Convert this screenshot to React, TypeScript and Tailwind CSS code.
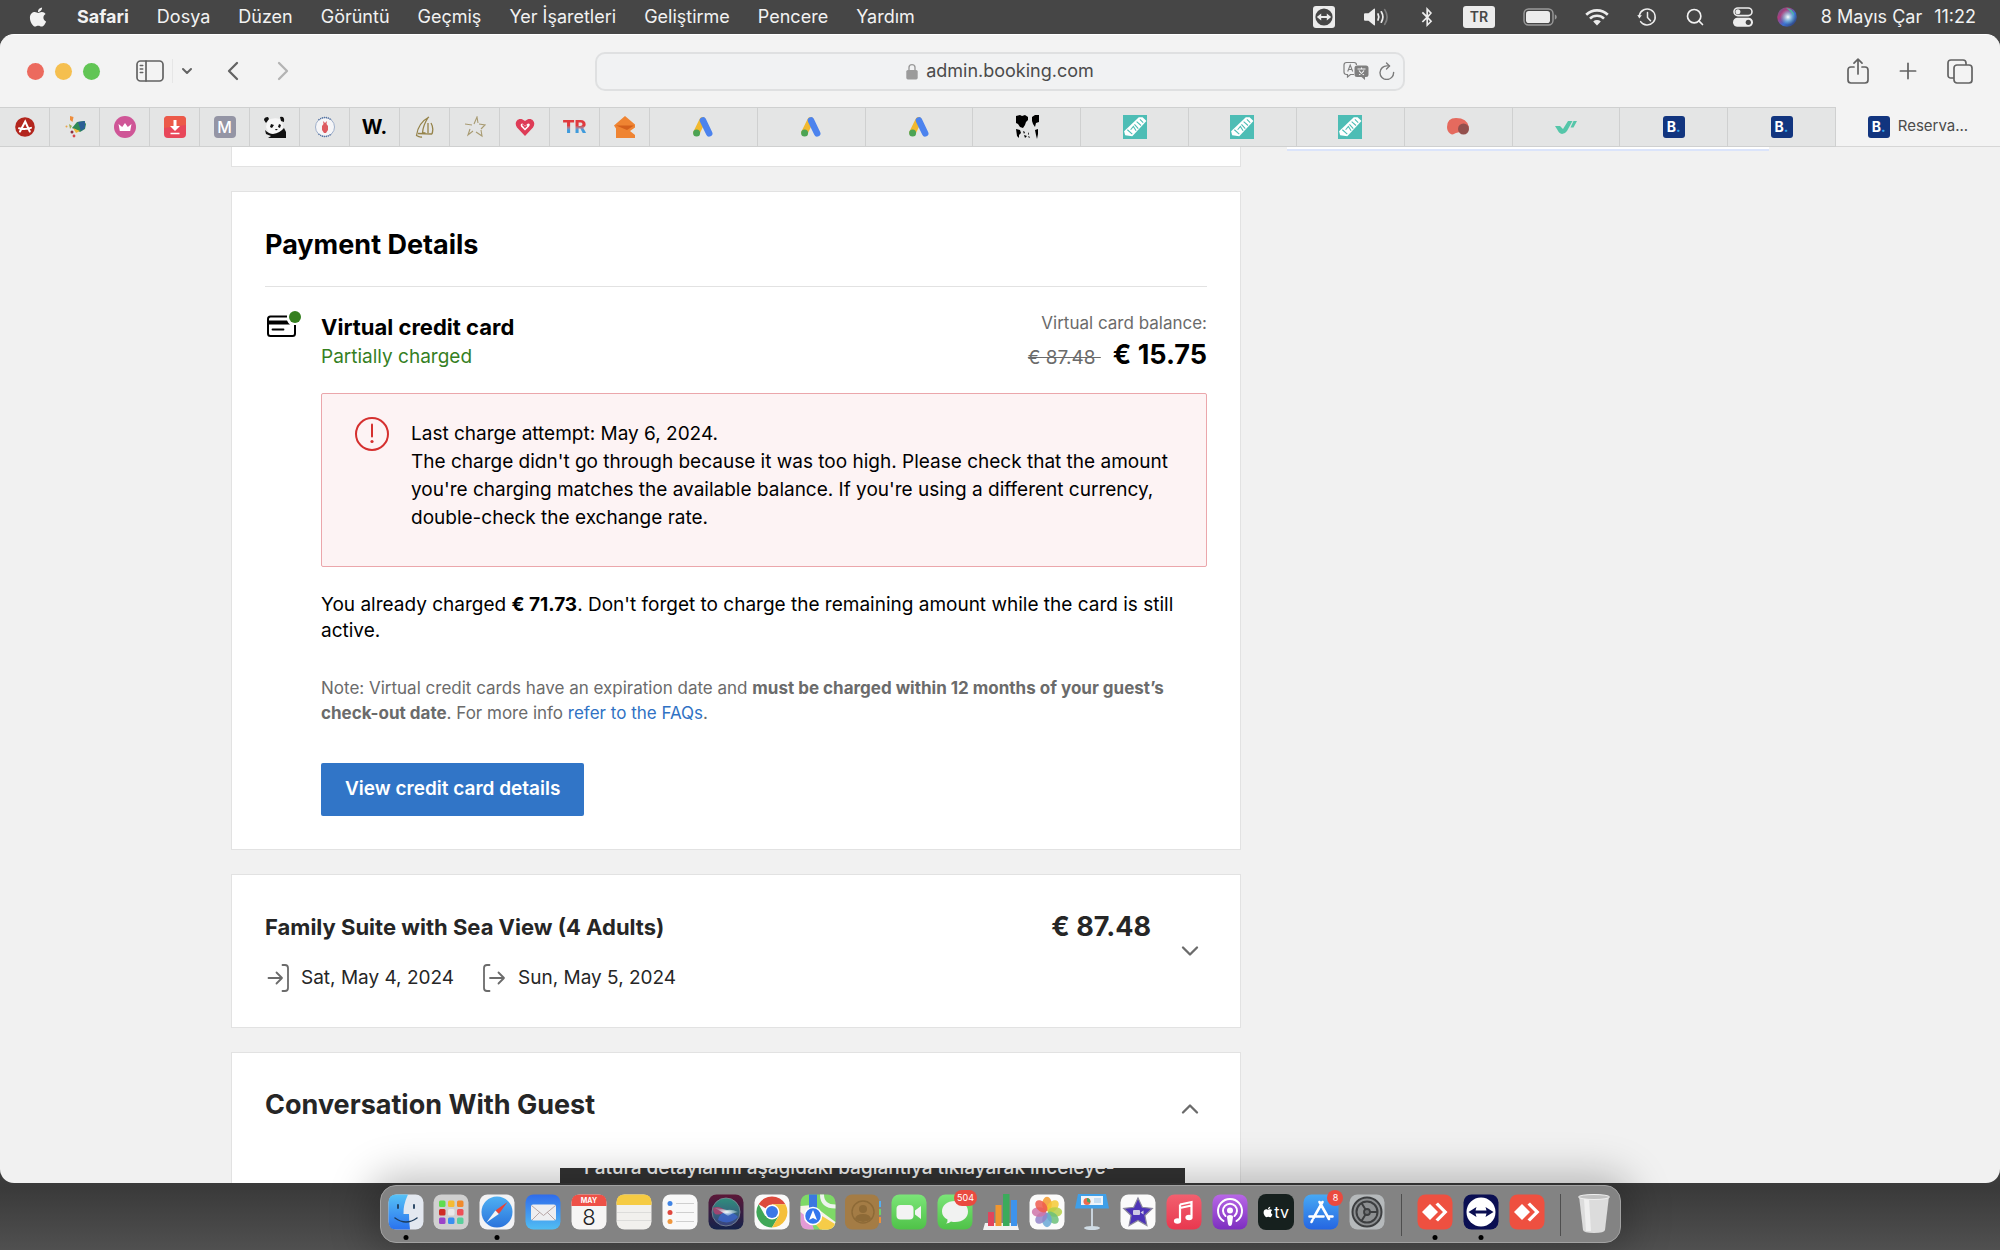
import React, { useState } from 'react';
import { FaApple, FaBluetoothB } from 'react-icons/fa';
import { ChevronDown, ChevronLeft, ChevronRight, ChevronUp, Plus, Search } from 'lucide-react';

const MENUS = ['Dosya', 'Düzen', 'Görüntü', 'Geçmiş', 'Yer İşaretleri', 'Geliştirme', 'Pencere', 'Yardım'];

interface IconProps {
  className?: string;
}

/* ---------- menu bar icons ---------- */

const TeamViewerGlyph: React.FC<IconProps> = ({ className }) => (
  <svg className={className} viewBox="0 0 22 22">
    <rect width="22" height="22" rx="3" fill="#ececec" />
    <circle cx="11" cy="11" r="8.6" fill="#464646" />
    <path d="M3.8 11l4.4-3.4v2.3h5.6V7.6l4.4 3.4-4.4 3.4v-2.3H8.2v2.3z" fill="#ececec" />
  </svg>
);

const VolumeIcon: React.FC<IconProps> = ({ className }) => (
  <svg className={className} viewBox="0 0 28 20" fill="none" strokeWidth="1.7" strokeLinecap="round">
    <path d="M1 7.2q0-1 1-1h3.500L11 1.800q1-.7 1 .5v15.400q0 1.200-1 .5l-5.500-4.400H2q-1 0-1-1z" fill="#ececec" />
    <path d="M15 7q1.600 3 0 6" stroke="#ececec" />
    <path d="M18.300 4.800q3.200 5.200 0 10.400" stroke="#ececec" />
    <path d="M21.700 2.600q4.800 7.400 0 14.800" stroke="#7d7d7d" />
  </svg>
);

const BatteryIcon: React.FC<IconProps> = ({ className }) => (
  <svg className={className} viewBox="0 0 34 18">
    <rect x="1" y="1" width="29" height="16" rx="4.5" fill="none" stroke="#9a9a9a" strokeWidth="1.4" />
    <rect x="3" y="3" width="24" height="12" rx="2.8" fill="#ececec" />
    <path d="M31.800 6.200q2 1 2 2.800t-2 2.800z" fill="#9a9a9a" />
  </svg>
);

const WifiIcon: React.FC<IconProps> = ({ className }) => (
  <svg className={className} viewBox="0 0 24 18" fill="none" stroke="#ececec" strokeWidth="2.6">
    <path d="M1.200 6.800a15.400 15.400 0 0 1 21.600 0" />
    <path d="M5 10.600a10 10 0 0 1 14 0" />
    <path d="M12 17.600l-3.800-4a5.600 5.600 0 0 1 7.600 0z" fill="#ececec" stroke="none" />
  </svg>
);

const TimeMachineIcon: React.FC<IconProps> = ({ className }) => (
  <svg className={className} viewBox="0 0 20 20" fill="none" stroke="#ececec" strokeWidth="1.5" strokeLinecap="round">
    <path d="M2.400 8.200a8 8 0 1 1 1.200 6.400" />
    <path d="M10.500 5.500v5l3 3.300" />
    <path d="M.3 8l4.600.2-2.600 3.300z" fill="#ececec" stroke="none" />
  </svg>
);

const ControlCenterIcon: React.FC<IconProps> = ({ className }) => (
  <svg className={className} viewBox="0 0 20 20">
    <rect x="1" y="1" width="18" height="7.6" rx="3.8" fill="none" stroke="#ececec" strokeWidth="1.6" />
    <circle cx="4.9" cy="4.8" r="2.5" fill="#ececec" />
    <rect y="10.8" width="20" height="9" rx="4.5" fill="#ececec" />
    <circle cx="15.3" cy="15.3" r="2.6" fill="#464646" />
  </svg>
);

const SiriOrb: React.FC<IconProps> = ({ className }) => (
  <svg className={className} viewBox="0 0 20 20">
    <defs>
      <linearGradient id="orb" x1="0" y1="0" x2="1" y2="1">
        <stop offset="0" stopColor="#3b6f8f" />
        <stop offset=".3" stopColor="#b23a7c" />
        <stop offset=".6" stopColor="#3d6fd0" />
        <stop offset="1" stopColor="#2b355f" />
      </linearGradient>
      <radialGradient id="orbGlow" cx=".55" cy=".5" r=".4">
        <stop offset="0" stopColor="#fff" />
        <stop offset="1" stopColor="#6fe0d8" stopOpacity="0" />
      </radialGradient>
    </defs>
    <circle cx="10" cy="10" r="9.8" fill="url(#orb)" />
    <circle cx="10" cy="10" r="9.8" fill="url(#orbGlow)" />
    <path d="M9 1q7 0 8 8-3-5-8-8z" fill="#3fcf9c" opacity=".8" />
  </svg>
);

/* ---------- toolbar icons ---------- */

const SidebarIcon: React.FC<IconProps> = ({ className }) => (
  <svg className={className} viewBox="0 0 28 22" fill="none" stroke="#636363" strokeWidth="1.7" strokeLinecap="round">
    <rect x="1" y="1" width="26" height="20" rx="3.5" />
    <path d="M10 1v20" />
    <path d="M4.200 5.500h2.600M4.200 9h2.600M4.200 12.500h2.600" strokeWidth="1.4" />
  </svg>
);

const LockIcon: React.FC<IconProps> = ({ className }) => (
  <svg className={className} viewBox="0 0 12 17">
    <path d="M3 8V4.600a3 3 0 0 1 6 0V8" fill="none" stroke="#9b9b9b" strokeWidth="1.4" />
    <rect x=".3" y="7" width="11.4" height="9.4" rx="1.6" fill="#9b9b9b" />
  </svg>
);

const TranslateIcon: React.FC<IconProps> = ({ className }) => (
  <svg className={className} viewBox="0 0 26 20" fill="none">
    <path d="M11 13.500H7.500L4.500 16v-2.500H3.500Q1 13.500 1 11V4Q1 1.500 3.500 1.500h7.500q2.500 0 2.500 2.500" stroke="#7f7f7f" strokeWidth="1.2" />
    <path d="M4.700 10.500L7.200 4l2.500 6.500M5.500 8.500h3.400" stroke="#7f7f7f" strokeWidth="1.1" />
    <path d="M14 4.500h9q2.500 0 2.500 2.500v6.500q0 2.500-2.500 2.500h-1v3l-3.500-3H14q-2.500 0-2.500-2.500V7q0-2.500 2.500-2.500z" fill="#7f7f7f" />
    <path d="M14.500 8h8M18.500 6.500V8M16 9.500q1.500 3 5 4.300M21 9.500q-1.500 3-5 4.300" stroke="#f1f2f3" strokeWidth="1.1" />
  </svg>
);

const ReloadIcon: React.FC<IconProps> = ({ className }) => (
  <svg className={className} viewBox="0 0 16 18" fill="none" stroke="#7a7a7a" strokeWidth="1.4" strokeLinecap="round">
    <path d="M14.600 10.400A6.800 6.800 0 1 1 8.300 3.900h2" />
    <path d="M7.500 1l3 3-3 3" />
  </svg>
);

const ShareIcon: React.FC<IconProps> = ({ className }) => (
  <svg className={className} viewBox="0 0 22 26" fill="none" stroke="#636363" strokeWidth="1.7" strokeLinecap="round" strokeLinejoin="round">
    <path d="M7 9H4Q1 9 1 12v10q0 3 3 3h14q3 0 3-3V12q0-3-3-3h-3" />
    <path d="M11 16V1.500M7 5.200l4-4 4 4" />
  </svg>
);

const TabsIcon: React.FC<IconProps> = ({ className }) => (
  <svg className={className} viewBox="0 0 26 25" fill="none" stroke="#636363" strokeWidth="1.7">
    <path d="M7 19H4q-3 0-3-3V4q0-3 3-3h12q3 0 3 3v2" />
    <rect x="7" y="6" width="18" height="18" rx="3" />
  </svg>
);

/* ---------- favicons ---------- */

const AdsIcon = () => (
  <svg className="size-[22px]" viewBox="0 0 22 22">
    <path d="M10.500 4.500L4.600 16.500" stroke="#f2b92f" strokeWidth="6.5" strokeLinecap="round" />
    <path d="M11 4.500l6.200 12.800" stroke="#4c83ee" strokeWidth="6.5" strokeLinecap="round" />
    <circle cx="4.6" cy="17" r="3.5" fill="#4ca354" />
  </svg>
);

const NutsIcon = () => (
  <svg className="size-6" viewBox="0 0 22 22">
    <rect width="22" height="22" fill="#4dbdb5" />
    <path d="M1 15L14.500 2H18l3.500 3.500L8.500 19.500 2 18.500z" fill="#fff" />
    <path d="M4 13.500l4.500 4M7 13.500l2.500-3 2.500 4M10.500 8.500l3.500 4M12.500 6l4 3.600M15.500 4l3 3" fill="none" stroke="#4dbdb5" strokeWidth="1" />
  </svg>
);

const WorldIcon = () => (
  <svg className="size-6" viewBox="0 0 24 24" fill="#000">
    <path d="M1 1l4-1 2 1 3-1 3 2v3l-2 2-1 3-2 3-3-1-2-3-2-1zM17 2l3-2h4v7l-3 1-1 4-2-3-1-3zM1 14l4 1 1 3-2 2v3l-2-2zM8 16l2 1-1 2zM9 20l3 1-2 2zM20 15l3-1v5l-1 5-1-4zM13 17l1 2-1 1zM13 21l2 1-1 1z" />
  </svg>
);

const BookingIcon = () => (
  <span className="flex size-[22px] items-center justify-center rounded-[3px] bg-[#12357f] text-sm font-bold text-white">
    B<span className="text-[#35a8ef]">.</span>
  </span>
);

const SMALL_TABS: { name: string; icon: React.ReactNode }[] = [
  {
    name: 'Agency',
    icon: (
      <svg className="size-5" viewBox="0 0 20 20">
        <circle cx="10" cy="10" r="9.8" fill="#b3261e" />
        <path d="M5 14.500L10.200 4.500l4.600 10M4 11.300q6 1.600 12-.4" fill="none" stroke="#fff" strokeWidth="2" strokeLinecap="round" />
      </svg>
    ),
  },
  {
    name: 'Peacock',
    icon: (
      <svg className="size-[22px]" viewBox="0 0 22 22">
        <path d="M6 0l3.500 1-1 5L6 4z" fill="#ee8d3c" />
        <circle cx="2.500" cy="10.500" r="1" fill="#e9a348" />
        <path d="M5 8l3 2-2 3z" fill="#9bb04e" />
        <path d="M8 12l5-6 7-1 2 3-1 5-5 3z" fill="#2e8a57" />
        <path d="M14 6l7-1v7l-4 3z" fill="#2c5f95" />
        <path d="M9 12l7 3-4 2z" fill="#efb93c" />
        <circle cx="8" cy="16" r="1.500" fill="#8e2f3e" />
        <circle cx="10" cy="20" r="1.400" fill="#d8454a" />
      </svg>
    ),
  },
  {
    name: 'Crown',
    icon: (
      <svg className="size-[22px]" viewBox="0 0 22 22">
        <circle cx="11" cy="11" r="11" fill="#cf5697" />
        <path d="M4.500 8l3.700 3L11 7l2.800 4 3.700-3-1.300 7H5.800z" fill="#fff" />
      </svg>
    ),
  },
  {
    name: 'Download',
    icon: (
      <svg className="size-[22px]" viewBox="0 0 22 22">
        <rect width="22" height="22" rx="4" fill="#e8475a" />
        <path d="M4 0h14q4 0 4 4v5L0 12V4q0-4 4-4z" fill="#ec5f45" opacity=".8" />
        <path d="M9.500 4h3v6H16l-5 5-5-5h3.500z" fill="#fff" />
        <path d="M6.500 17.500h9" stroke="#fff" strokeWidth="1.5" />
      </svg>
    ),
  },
  {
    name: 'M',
    icon: <span className="flex size-[22px] items-center justify-center rounded bg-[#9495a5] text-base font-medium text-white">M</span>,
  },
  {
    name: 'Panda',
    icon: (
      <svg className="size-6" viewBox="0 0 24 24">
        <path d="M5 5q6-3 12-1l3 6-1 6-6 4-7-2-3-6z" fill="#f7f7f7" />
        <path d="M1 5q0-3 4-3l1 2-3 4zM17 2q5-1 4 5l-3-1zM8 9l3 1-2 3-2-1zM16 9l2 1-1 3-2-1zM12 14h3l-2 1.500z" fill="#111" />
        <path d="M2 15q4 4 8 4 7-1 11-6l2 4v6H5l3-2-5-2z" fill="#111" />
      </svg>
    ),
  },
  {
    name: 'Ministry',
    icon: (
      <svg className="size-[22px]" viewBox="0 0 22 22">
        <circle cx="11" cy="11" r="9.5" fill="#f5f5f7" stroke="#9fb0cb" strokeWidth="1" />
        <path d="M4.500 4q6.500-5 13 0M4.500 18q6.500 5 13 0" fill="none" stroke="#4f6f9f" strokeWidth="1.5" strokeDasharray="1 1" />
        <path d="M9 5l2 2 2-2-.5 3 1.500 2v4l-2 3h-2l-2-3v-4l1.500-2z" fill="#dd5a5f" />
      </svg>
    ),
  },
  { name: 'W', icon: <span className="text-xl font-bold text-black">W.</span> },
  {
    name: 'Sail',
    icon: (
      <svg className="size-[22px]" viewBox="0 0 22 22" fill="none" stroke="#95834a" strokeWidth="1.3">
        <path d="M15 1Q4 7 2.500 19.500q3 2 5.500 1.500M14.500 1Q9 9 8.500 17h3M14 7v10M17 7q3 5 1 11M4 17.500l14 .5" />
      </svg>
    ),
  },
  {
    name: 'Star',
    icon: (
      <svg className="size-[22px]" viewBox="0 0 22 22" fill="none" stroke="#a89b72" strokeWidth="1.1">
        <path d="M10 8l3-7 1 6M15 8l6 1-4 4M17 14l1 6-6-4M9 15l-5 4 2-6M1 8l7 1" />
      </svg>
    ),
  },
  {
    name: 'Heart',
    icon: (
      <svg className="size-5" viewBox="0 0 20 20">
        <path d="M10 19L2 10.500C-2 5 4-1.500 10 4c6-5.500 12 1 8 6.500z" fill="#de3c57" />
        <path d="M10 13.500L6 9.500q-1-3 1.500-3L10 9l3-2.500q3 0 1 3z" fill="#fff" />
        <path d="M7.500 7.500l2.500 3 2-2" fill="none" stroke="#de3c57" strokeWidth="1.2" />
      </svg>
    ),
  },
  { name: 'TR', icon: <span className="bg-gradient-to-b from-[#e03a3e] from-45% to-[#3f9bdc] to-60% bg-clip-text text-lg font-extrabold text-transparent">TR</span> },
  {
    name: 'Home',
    icon: (
      <svg className="size-[22px]" viewBox="0 0 22 22">
        <path d="M11 0l10 8.500v3L16 15l5 4v3H2V12.500L0 9.500z" fill="#ef8432" />
        <path d="M2 9.500h18L13 14z" fill="#d4601c" />
      </svg>
    ),
  },
];

const WIDE_TABS: { name: string; icon: React.ReactNode }[] = [
  { name: 'Google Ads 1', icon: <AdsIcon /> },
  { name: 'Google Ads 2', icon: <AdsIcon /> },
  { name: 'Google Ads 3', icon: <AdsIcon /> },
  { name: 'World', icon: <WorldIcon /> },
  { name: 'Nuts 1', icon: <NutsIcon /> },
  { name: 'Nuts 2', icon: <NutsIcon /> },
  { name: 'Nuts 3', icon: <NutsIcon /> },
  {
    name: 'Petal',
    icon: (
      <svg className="size-[22px]" viewBox="0 0 22 22">
        <path d="M3 17.500Q0 15 0 11 0 2 9 2q11 0 13 9-2 5-9 5-5 1-6 2-2 1-4-.5z" fill="#e56a5e" />
        <circle cx="16.500" cy="13" r="5.500" fill="#93504d" />
      </svg>
    ),
  },
  {
    name: 'Check',
    icon: (
      <svg className="size-[22px]" viewBox="0 0 22 22" fill="#55c6a9">
        <path d="M0 10h5l3 3 5-8h4.500L12 15q-2 3-5 3-3-.5-4.500-4z" />
        <path d="M18.500 5H22l-3.500 6.500h-3z" />
      </svg>
    ),
  },
  { name: 'Booking 1', icon: <BookingIcon /> },
  { name: 'Booking 2', icon: <BookingIcon /> },
];

/* ---------- dock ---------- */

interface TileProps {
  fill: string;
  children?: React.ReactNode;
}

const Tile: React.FC<TileProps> = ({ fill, children }) => (
  <svg className="size-9" viewBox="0 0 36 36">
    <rect x=".5" y=".5" width="35" height="35" rx="8" fill={fill} />
    {children}
  </svg>
);

const APP_GRID = ['#5fdc4f', '#f5bb33', '#f08a2c', '#cf2b25', '#e8e8e8', '#ee4f57', '#9b44c9', '#3a8ff0', '#59cf9b'];
const PETALS = ['#f39a2b', '#f5c935', '#b4cf48', '#6bbf79', '#6aa8d6', '#9384c8', '#cf74a8', '#ee5a4c'];

const AnyDeskTile = () => (
  <Tile fill="#ee5040">
    <path d="M5 18l8-8 8 8-8 8z" fill="#fff" />
    <path d="M18.500 10.500l2.500-2 9.500 9.500-9.500 9.500-2.500-2L26 18z" fill="#fff" />
  </Tile>
);

const DOCK_APPS: { name: string; running?: boolean; badge?: string; icon: React.ReactNode }[] = [
  {
    name: 'Finder',
    running: true,
    icon: (
      <Tile fill="#e3e8f0">
        <path d="M8.500.5H20Q15 11 15.500 20H21q0 8 1 15.500H8.500q-8 0-8-8v-19q0-8 8-8z" fill="url(#finderBlue)" />
        <path d="M10 11v3M26 11v3" stroke="#1d3c5c" strokeWidth="1.8" strokeLinecap="round" />
        <path d="M7 24q11 8 22 0" fill="none" stroke="#1d3c5c" strokeWidth="1.5" strokeLinecap="round" />
      </Tile>
    ),
  },
  {
    name: 'Launchpad',
    icon: (
      <Tile fill="#d0d0d0">
        {APP_GRID.map((color, i) => (
          <rect key={color} x={6 + (i % 3) * 9} y={6.5 + Math.floor(i / 3) * 8.5} width="6.5" height="6.5" rx="1.5" fill={color} />
        ))}
      </Tile>
    ),
  },
  {
    name: 'Safari',
    running: true,
    icon: (
      <Tile fill="#f3f3f5">
        <circle cx="18" cy="18" r="15.5" fill="url(#safariBlue)" />
        <path d="M28.500 8L19.800 20l-3.400-3.600z" fill="#ea4335" />
        <path d="M7.500 28.500l8.900-12.100 3.400 3.600z" fill="#f4f4f4" />
      </Tile>
    ),
  },
  {
    name: 'Mail',
    icon: (
      <Tile fill="url(#mailBlue)">
        <rect x="6" y="10.500" width="25" height="16" rx="2" fill="#eeeef0" />
        <path d="M6.500 11.500l12 10 12-10M7 26l8-8M30 26l-8-8" fill="none" stroke="#b7a6a6" strokeWidth="1" />
      </Tile>
    ),
  },
  {
    name: 'Calendar',
    icon: (
      <Tile fill="#f6f5f4">
        <path d="M8.500.5h19q8 0 8 8V12H.5V8.500q0-8 8-8z" fill="#ee5147" />
        <text x="18" y="9" textAnchor="middle" fontSize="7" fontWeight="700" fill="#fff">MAY</text>
        <text x="18" y="31" textAnchor="middle" fontSize="22" fontWeight="300" fill="#222">8</text>
      </Tile>
    ),
  },
  {
    name: 'Notes',
    icon: (
      <Tile fill="#f1f0ed">
        <path d="M8.500.5h19q8 0 8 8V11H.5V8.500q0-8 8-8z" fill="#f5cb43" />
        <path d="M1 18.500h34M1 26.500h34" stroke="#dcdcda" strokeWidth="1" />
      </Tile>
    ),
  },
  {
    name: 'Reminders',
    icon: (
      <Tile fill="#f8f8f8">
        <circle cx="8" cy="9.500" r="2.500" fill="#3f84e5" />
        <circle cx="8" cy="18.500" r="2.500" fill="#e0473e" />
        <circle cx="8" cy="27.500" r="2.500" fill="#f0963c" />
        <path d="M14 9.500h18M14 18.500h18M14 27.500h18" stroke="#cfcfcf" strokeWidth="1" />
      </Tile>
    ),
  },
  {
    name: 'Siri',
    icon: (
      <Tile fill="url(#siriBack)">
        <circle cx="18" cy="18" r="14" fill="url(#siriOrb)" stroke="#7f8d97" strokeWidth=".8" />
        <path d="M5 14q6-3 13 3-6 5-11 3-2-2-2-6z" fill="#c23b6d" opacity=".75" />
        <path d="M10 26q2-8 9-8t11 5q-9 9-20 3z" fill="#3d66d6" opacity=".7" />
        <path d="M7 14q8 1 12 2 5-1 11 2-6 1-10 4-6-4-13-8z" fill="url(#siriGlow)" />
      </Tile>
    ),
  },
  {
    name: 'Chrome',
    icon: (
      <Tile fill="#fafafa">
        <path d="M18 18L4.600 10.200A15.500 15.500 0 0 1 31.400 10.200H18z" fill="#dd4a3d" />
        <path d="M18 18l-6.800 4L4.600 10.200A15.500 15.500 0 0 0 18 33.500l6.800-11.700z" fill="#3fa757" />
        <path d="M18 10.300h13.400A15.500 15.500 0 0 1 18 33.500l6.800-11.500z" fill="#f5bf3a" />
        <circle cx="18" cy="18" r="7.5" fill="#fff" />
        <circle cx="18" cy="18" r="6" fill="#3b78e7" />
      </Tile>
    ),
  },
  {
    name: 'Maps',
    icon: (
      <Tile fill="#7ed967">
        <path d="M.5 14Q10 20 14 35.500H8.500q-8 0-8-8z" fill="#e39ad6" />
        <path d="M.5 12l12-1 23 17q-1 7-8 7.500H22L.5 18z" fill="#f7f4ea" />
        <path d="M20 35.500L14 28l8-6 13 8q-2 5-7 5.500z" fill="#f6cc48" />
        <path d="M9 .5h8V16H9z" fill="#3b78e0" />
        <path d="M22 .5q0 12 13.500 12" fill="none" stroke="#eef3ee" strokeWidth="4" />
        <circle cx="13" cy="22" r="8.5" fill="#3277ee" stroke="#fff" strokeWidth="1.5" />
        <path d="M13 16l4 10-4-2-4 2z" fill="#fff" />
      </Tile>
    ),
  },
  {
    name: 'Contacts',
    icon: (
      <svg className="size-9" viewBox="0 0 36 36">
        <path d="M33 7h3v6h-3z" fill="#55aef0" />
        <path d="M33 15h3v6h-3z" fill="#6fcf6b" />
        <path d="M33 23h3v6h-3z" fill="#f0903a" />
        <rect x="0" y=".5" width="34" height="35" rx="7" fill="#a47c45" />
        <circle cx="18" cy="18" r="11" fill="none" stroke="#8d6a37" strokeWidth="1.4" />
        <circle cx="18" cy="15" r="4" fill="#8d6a37" />
        <path d="M10 25q1-5 8-5t8 5q-8 6-16 0z" fill="#8d6a37" />
      </svg>
    ),
  },
  {
    name: 'FaceTime',
    icon: (
      <Tile fill="url(#green)">
        <rect x="5.500" y="11" width="17" height="14.500" rx="4" fill="#f3f3f3" />
        <path d="M24 16.500l6-4.500v13l-6-4.500z" fill="#f3f3f3" />
      </Tile>
    ),
  },
  {
    name: 'Messages',
    badge: '504',
    icon: (
      <Tile fill="url(#green)">
        <path d="M18 7c8 0 13 4.500 13 10.500S26 28 18 28q-2 0-4-.5-2 2-5 2 2-2 1.500-4Q5 22.500 5 17.500C5 11.500 10 7 18 7z" fill="#f1f2f1" />
      </Tile>
    ),
  },
  {
    name: 'Numbers',
    icon: (
      <svg className="size-9" viewBox="0 0 36 36">
        <path d="M2 29h32l2 7H0z" fill="#f2f2f2" />
        <path d="M5 18h6v14H5z" fill="#e2455c" />
        <path d="M12.500 11h6v21h-6z" fill="#f0962f" />
        <path d="M20 0h6.500v32H20z" fill="#3cab5b" />
        <path d="M28 6h6v26h-6z" fill="#3d93ec" />
      </svg>
    ),
  },
  {
    name: 'Photos',
    icon: (
      <Tile fill="#fbfbfb">
        {PETALS.map((color, i) => (
          <ellipse key={color} cx="18" cy="10" rx="4.8" ry="7.2" fill={color} opacity=".85" transform={`rotate(${i * 45} 18 18)`} />
        ))}
      </Tile>
    ),
  },
  {
    name: 'Keynote',
    icon: (
      <svg className="size-9" viewBox="0 0 36 36">
        <path d="M17 14h2v20h-2z" fill="#c9d3dc" />
        <ellipse cx="18" cy="34" rx="8" ry="2" fill="#cfdbe4" />
        <path d="M4 0h28l3 14.500H1z" fill="#3f9fe8" />
        <path d="M7 2h22v9H7z" fill="#eef4fa" />
        <circle cx="13" cy="7.500" r="3.500" fill="#ea6a4f" />
        <path d="M13 4a3.500 3.500 0 0 1 3 5l-3-1.500z" fill="#41a862" />
        <path d="M20 4h7v5h-7z" fill="#c5ddf2" />
      </svg>
    ),
  },
  {
    name: 'iMovie',
    icon: (
      <Tile fill="#fbfbfb">
        <path d="M18 4l4.300 9.300 10 1.200-7.400 7 2 10L18 26.400 9.100 31.500l2-10-7.400-7 10-1.200z" fill="#4d34b8" stroke="#8d8a9c" strokeWidth="1.2" />
        <rect x="13" y="16" width="7" height="5" rx="1" fill="#cfcbe4" />
        <path d="M20.500 18.500l3-2v4z" fill="#cfcbe4" />
      </Tile>
    ),
  },
  {
    name: 'Music',
    icon: (
      <Tile fill="url(#musicRed)">
        <path d="M14 10.500l11.500-2.500v14.500M14 27V10.500M14 14l11.500-2.500" fill="none" stroke="#fff" strokeWidth="2.2" />
        <ellipse cx="11.500" cy="27" rx="3.600" ry="2.800" fill="#fff" />
        <ellipse cx="23" cy="23.500" rx="3.600" ry="2.800" fill="#fff" />
      </Tile>
    ),
  },
  {
    name: 'Podcasts',
    icon: (
      <Tile fill="url(#podPurple)">
        <path d="M11.500 27a12 12 0 1 1 13 0M13.500 22a7 7 0 1 1 9 0" fill="none" stroke="#fff" strokeWidth="2" strokeLinecap="round" />
        <circle cx="18" cy="16.500" r="3" fill="#fff" />
        <path d="M15 23q0-2 3-2t3 2l-1 7q-.5 2-2 2t-2-2z" fill="#fff" />
      </Tile>
    ),
  },
  {
    name: 'TV',
    icon: (
      <span className="flex size-9 items-center justify-center rounded-lg bg-[#16201e] text-base text-white">
        <FaApple className="size-3" />tv
      </span>
    ),
  },
  {
    name: 'App Store',
    badge: '8',
    icon: (
      <Tile fill="url(#storeBlue)">
        <path d="M19.500 8l-9 16M16.500 8l9.500 17M6.500 22.500h14M26 22.500h3.500M9.500 26l-1 2" stroke="#fff" strokeWidth="2.6" strokeLinecap="round" />
      </Tile>
    ),
  },
  {
    name: 'System Settings',
    icon: (
      <Tile fill="#b5b9bb">
        <circle cx="18" cy="18" r="14.5" fill="#8b8e90" stroke="#3c3e40" strokeWidth="2" />
        <circle cx="18" cy="18" r="10.500" fill="#8d9092" stroke="#3c3e40" strokeWidth="2" />
        <circle cx="18" cy="18" r="3" fill="#6f7274" stroke="#3c3e40" strokeWidth="1.8" />
        <path d="M21 18h7.500M16.500 15.500l-4-6.500M16.500 20.500l-4 6.500" stroke="#3c3e40" strokeWidth="2" />
      </Tile>
    ),
  },
];

const DOCK_REMOTE: typeof DOCK_APPS = [
  { name: 'AnyDesk', running: true, icon: <AnyDeskTile /> },
  {
    name: 'TeamViewer',
    running: true,
    icon: (
      <Tile fill="#0b0f52">
        <circle cx="18" cy="18" r="14.5" fill="#fff" />
        <path d="M5.500 18l8-5-1 3.500h11l-1-3.500 8 5-8 5 1-3.500h-11l1 3.500z" fill="#0b0f52" />
      </Tile>
    ),
  },
  { name: 'AnyDesk 2', icon: <AnyDeskTile /> },
];

const DockGradients = () => (
  <svg className="absolute size-0" aria-hidden="true">
    <defs>
      {[
        ['finderBlue', '#56c2f7', '#2a72ee'],
        ['safariBlue', '#4fb0f2', '#2a73dc'],
        ['mailBlue', '#2f6ceb', '#51bdf3'],
        ['siriBack', '#5c1838', '#14234b'],
        ['siriOrb', '#2f8f7c', '#3a3f7c'],
        ['green', '#7be578', '#4fc248'],
        ['musicRed', '#f2606f', '#e8384f'],
        ['podPurple', '#b867e6', '#7d2fc0'],
        ['storeBlue', '#47a9f4', '#2566e2'],
      ].map(([id, from, to]) => (
        <linearGradient key={id} id={id} x1="0" y1="0" x2="0" y2="1">
          <stop offset="0" stopColor={from} />
          <stop offset="1" stopColor={to} />
        </linearGradient>
      ))}
      <radialGradient id="siriGlow">
        <stop offset="0" stopColor="#fff" />
        <stop offset="1" stopColor="#bfe6ea" stopOpacity=".3" />
      </radialGradient>
    </defs>
  </svg>
);

const DockItem: React.FC<(typeof DOCK_APPS)[number]> = ({ name, running, badge, icon }) => (
  <button type="button" aria-label={name} className="relative">
    {icon}
    {badge && (
      <span className="absolute -top-1 -right-1 flex h-4 min-w-4 items-center justify-center rounded-full bg-[#ea4a3f] px-[3px] text-[9px] leading-4 text-white">
        {badge}
      </span>
    )}
    {running && <span className="absolute -bottom-2.5 left-1/2 size-[5px] -translate-x-1/2 rounded-full bg-black" />}
  </button>
);

/* ---------- sections ---------- */

const MenuBar = () => (
  <header className="flex h-[34px] shrink-0 items-center justify-between bg-[#464646] pr-6 pl-[27px] text-lg leading-6 text-[#f2f2f2]">
    <nav className="flex items-center gap-7">
      <button type="button" aria-label="Apple">
        <FaApple className="size-[22px]" />
      </button>
      <button type="button" className="font-bold">Safari</button>
      {MENUS.map((menu) => (
        <button type="button" key={menu}>{menu}</button>
      ))}
    </nav>
    <div className="flex items-center gap-7">
      <TeamViewerGlyph className="size-[22px]" />
      <VolumeIcon className="h-5 w-7" />
      <FaBluetoothB className="h-5 w-4 text-[#ececec]" />
      <span className="w-8 rounded-[3px] bg-[#ececec] text-center text-sm leading-[22px] font-semibold text-[#464646]">TR</span>
      <BatteryIcon className="h-[18px] w-[34px]" />
      <WifiIcon className="h-[18px] w-6" />
      <TimeMachineIcon className="size-5" />
      <Search className="size-5" strokeWidth={2} />
      <div className="flex items-center gap-6">
        <ControlCenterIcon className="size-5" />
        <SiriOrb className="size-5" />
        <div className="flex gap-3">
          <span>8 Mayıs Çar</span>
          <time>11:22</time>
        </div>
      </div>
    </div>
  </header>
);

const Toolbar = () => (
  <div className="flex h-[72px] items-center bg-[#f3f3f3] px-[27px] text-[#636363]">
    <div className="flex flex-1 items-center">
      <div className="flex gap-[11px]">
        <button type="button" aria-label="Close" className="size-[17px] rounded-full bg-[#ec6a5e]" />
        <button type="button" aria-label="Minimize" className="size-[17px] rounded-full bg-[#f5bf4f]" />
        <button type="button" aria-label="Zoom" className="size-[17px] rounded-full bg-[#61c554]" />
      </div>
      <button type="button" aria-label="Sidebar" className="ml-9">
        <SidebarIcon className="h-[22px] w-7" />
      </button>
      <button type="button" aria-label="Tab groups" className="ml-2 border-l border-[#e6e6e6] py-1 pl-[6px]">
        <ChevronDown className="size-4" strokeWidth={3} />
      </button>
      <button type="button" aria-label="Back" className="ml-[22px]">
        <ChevronLeft className="size-8" strokeWidth={1.7} />
      </button>
      <button type="button" aria-label="Forward" className="ml-[18px] text-[#b3b3b3]">
        <ChevronRight className="size-8" strokeWidth={1.7} />
      </button>
    </div>
    <div className="flex h-[39px] w-[810px] items-center rounded-[10px] border-2 border-[#dfe0e1] bg-[#f1f2f3] px-2">
      <span className="w-[52px]" />
      <div className="flex flex-1 items-center justify-center gap-2">
        <LockIcon className="h-[17px] w-3" />
        <span className="text-lg leading-6 text-[#4b4b4b]">admin.booking.com</span>
      </div>
      <button type="button" aria-label="Translate">
        <TranslateIcon className="h-5 w-[26px]" />
      </button>
      <button type="button" aria-label="Reload" className="ml-2.5">
        <ReloadIcon className="h-[18px] w-4" />
      </button>
    </div>
    <div className="flex flex-1 items-center justify-end">
      <button type="button" aria-label="Share">
        <ShareIcon className="h-[26px] w-[22px]" />
      </button>
      <button type="button" aria-label="New tab" className="ml-[26px]">
        <Plus className="size-[26px]" strokeWidth={1.6} />
      </button>
      <button type="button" aria-label="Show tabs" className="ml-[26px]">
        <TabsIcon className="h-[25px] w-[26px]" />
      </button>
    </div>
  </div>
);

const TabBar = () => (
  <div className="flex h-10 bg-[#e4e5e5]">
    {SMALL_TABS.map(({ name, icon }) => (
      <button type="button" key={name} aria-label={name} className="flex w-[50px] items-center justify-center border-t border-r border-b border-[#cfd0d0]">
        {icon}
      </button>
    ))}
    {WIDE_TABS.map(({ name, icon }) => (
      <button type="button" key={name} aria-label={name} className="flex flex-1 items-center justify-center border-t border-r border-b border-[#cfd0d0]">
        {icon}
      </button>
    ))}
    <button type="button" className="flex w-[164px] items-center justify-center gap-2 border-b border-[#d6d6d6] bg-[#f3f3f3] text-[15px] text-[#4b4b4b]">
      <BookingIcon />
      Reserva...
    </button>
  </div>
);

const CardStatusIcon: React.FC<IconProps> = ({ className }) => (
  <svg className={className} viewBox="0 0 36 28">
    <path d="M22 5.500H5.500Q3 5.500 3 8v14.500Q3 25 5.500 25h22q2.500 0 2.500-2.500V14" fill="none" stroke="#000" strokeWidth="2" />
    <path d="M3 9.500h19q1 2.500 3 4H3z" />
    <path d="M7.500 18.500h11" stroke="#000" strokeWidth="1.8" strokeLinecap="round" />
    <circle cx="30" cy="6" r="6" fill="#35801f" />
  </svg>
);

const PaymentDetails = () => (
  <section className="border border-[#e2e2e2] bg-white px-[33px] pt-[35px] pb-[33px] text-black">
    <h2 className="border-b border-[#e2e2e2] pb-[23px] text-[27px] leading-9 font-bold">Payment Details</h2>
    <div className="flex pt-6">
      <div className="w-14 shrink-0">
        <CardStatusIcon className="h-7 w-9" />
      </div>
      <div className="flex-1">
        <div className="flex justify-between">
          <div>
            <h3 className="text-[22px] leading-8 font-bold">Virtual credit card</h3>
            <p className="text-[19px] leading-7 text-[#35801f]">Partially charged</p>
          </div>
          <div className="text-right">
            <p className="text-[17px] leading-6 text-[#6b6b6b]">Virtual card balance:</p>
            <p className="flex items-baseline justify-end gap-3">
              <s className="text-[19px] text-[#6b6b6b]">€ 87.48&nbsp;</s>
              <strong className="text-[27px] leading-10 font-bold">€ 15.75</strong>
            </p>
          </div>
        </div>
        <div role="alert" className="mt-[18px] flex gap-[21px] rounded-xs border border-[#eba6ab] bg-[#fdf3f4] pt-[26px] pr-7 pb-[34px] pl-8">
          <svg className="mt-[-4px] size-9 shrink-0" viewBox="0 0 36 36" fill="none" stroke="#d5302f" strokeWidth="2">
            <circle cx="18" cy="18" r="16" />
            <path d="M18 8.500v12" strokeLinecap="round" />
            <circle cx="18" cy="25.500" r="1.600" fill="#d5302f" stroke="none" />
          </svg>
          <p className="text-[19px] leading-7">
            Last charge attempt: May 6, 2024.
            <br />
            The charge didn't go through because it was too high. Please check that the amount you're charging matches the
            available balance. If you're using a different currency, double-check the exchange rate.
          </p>
        </div>
        <p className="mt-[25px] text-[19px] leading-[26px]">
          You already charged <b className="font-bold">€ 71.73</b>. Don't forget to charge the remaining amount while the card is
          still active.
        </p>
        <p className="mt-8 text-[17px] leading-[25px] text-[#6b6b6b]">
          Note: Virtual credit cards have an expiration date and{' '}
          <b className="font-bold">must be charged within 12 months of your guest’s check-out date</b>. For more info{' '}
          <a href="#faqs" className="text-[#3072c4]">refer to the FAQs</a>.
        </p>
        <button type="button" className="mt-[37px] h-[53px] rounded-xs bg-[#3175c7] px-6 text-[19px] font-semibold text-white">
          View credit card details
        </button>
      </div>
    </div>
  </section>
);

const RoomCard = () => (
  <section className="flex items-center border border-[#e2e2e2] bg-white pt-[38px] pr-9 pb-[35px] pl-[33px] text-[#262626]">
    <div className="flex-1">
      <div className="flex justify-between">
        <h3 className="text-[22px] leading-7 font-bold">Family Suite with Sea View (4 Adults)</h3>
        <strong className="text-[27px] leading-7 font-bold">€ 87.48</strong>
      </div>
      <div className="mt-[23px] flex text-[19px] leading-7">
        <span className="flex items-center gap-3">
          <svg className="h-7 w-6" viewBox="0 0 24 28" fill="none" stroke="#6b6b6b" strokeWidth="1.8" strokeLinecap="round" strokeLinejoin="round">
            <path d="M17.500 1H20q3 0 3 3v20q0 3-3 3h-2.500M3.500 14H17M11.500 8.500L17 14l-5.500 5.500" />
          </svg>
          Sat, May 4, 2024
        </span>
        <span className="ml-7 flex items-center gap-3">
          <svg className="h-7 w-6" viewBox="0 0 24 28" fill="none" stroke="#6b6b6b" strokeWidth="1.8" strokeLinecap="round" strokeLinejoin="round">
            <path d="M7.500 1H5Q2 1 2 4v20q0 3 3 3h2.500M8 14h14M16.500 8.500L22 14l-5.500 5.500" />
          </svg>
          Sun, May 5, 2024
        </span>
      </div>
    </div>
    <button type="button" aria-label="Show room" className="ml-[25px] pb-1">
      <ChevronDown className="size-7 text-[#6b6b6b]" strokeWidth={2} />
    </button>
  </section>
);

const Conversation: React.FC = () => {
  const [open, setOpen] = useState(true);

  return (
    <section className="border border-[#e2e2e2] bg-white pt-[34px] pl-[33px] text-[#262626]">
      <div className="flex items-end justify-between pr-9">
        <h2 className="text-[27px] leading-9 font-bold">Conversation With Guest</h2>
        <button type="button" aria-label="Toggle conversation" onClick={() => setOpen(!open)}>
          {open ? <ChevronUp className="size-7 text-[#6b6b6b]" /> : <ChevronDown className="size-7 text-[#6b6b6b]" />}
        </button>
      </div>
      {open && (
        <div className="mt-[45px] mr-[55px] ml-[295px] h-40 overflow-hidden bg-[#333] px-6">
          <p className="-mt-3.5 text-[19px] leading-7 font-medium text-[#f1f1f1]">
            Fatura detaylarını aşağıdaki bağlantıya tıklayarak inceleye-
          </p>
        </div>
      )}
    </section>
  );
};

const Dock = () => (
  <footer className="flex h-[67px] shrink-0 justify-center pt-0.5">
    <DockGradients />
    <div className="relative flex h-[58px] w-[1241px] items-start rounded-2xl border border-[#a2a2a2] bg-[#838383] pt-2 pr-2 pl-[7px] shadow-[0_0_40px_10px_rgba(0,0,0,0.25)]">
      <div className="flex flex-1 justify-between">
        {DOCK_APPS.map((app) => (
          <DockItem key={app.name} {...app} />
        ))}
      </div>
      <div className="mx-[15px] h-[42px] w-px bg-[#4e4e4e]" />
      <div className="flex gap-2.5">
        {DOCK_REMOTE.map((app) => (
          <DockItem key={app.name} {...app} />
        ))}
      </div>
      <div className="mx-[15px] h-[42px] w-px bg-[#4e4e4e]" />
      <button type="button" aria-label="Trash">
        <svg className="h-10 w-9" viewBox="0 0 36 40">
          <path d="M3 2h30l-4 34q-.5 3-11 3T7 36z" fill="#dcdcdc" />
          <path d="M8 5h5l2 32h-5z" fill="#efefef" />
          <ellipse cx="18" cy="3" rx="15.500" ry="2.500" fill="#c2c2c2" stroke="#f0f0f0" />
        </svg>
      </button>
    </div>
  </footer>
);

const App: React.FC = () => (
  <div className="flex h-screen flex-col overflow-hidden bg-gradient-to-b from-[#464646] from-90% via-[#3a3a3a] via-95% to-[#505050] font-['Inter','Liberation_Sans',sans-serif]">
    <MenuBar />
    <div className="flex min-h-0 flex-1 flex-col overflow-hidden rounded-[14px] border-t border-white bg-[#f1f1f1]">
      <Toolbar />
      <TabBar />
      <main className="min-h-0 flex-1 overflow-hidden">
        <div className="mx-auto flex max-w-[1538px] items-start gap-[46px]">
          <div className="flex min-w-0 flex-1 flex-col gap-6">
            <section className="h-5 border border-t-0 border-[#e2e2e2] bg-white" />
            <PaymentDetails />
            <RoomCard />
            <Conversation />
          </div>
          <aside className="h-1 w-[482px] border-b-2 border-[#dbe4fa] bg-white" />
        </div>
      </main>
    </div>
    <Dock />
  </div>
);

export default App;
